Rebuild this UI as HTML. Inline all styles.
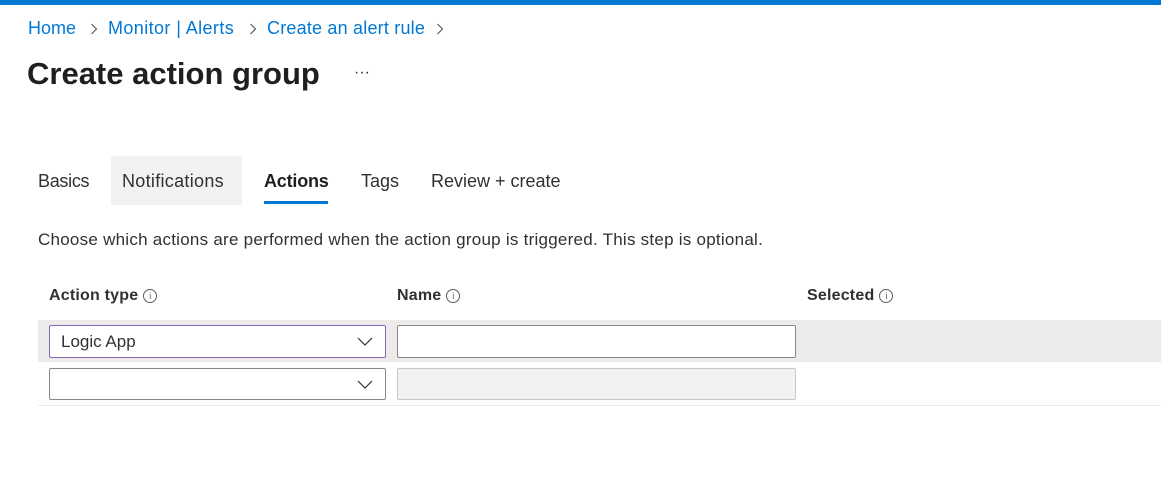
<!DOCTYPE html><html><head><style>
body{margin:0;width:1161px;height:496px;background:#fff;font-family:"Liberation Sans",sans-serif;color:#323130;position:relative;overflow:hidden}
.a{position:absolute;white-space:nowrap}
.bc{color:#0078d4;font-size:18px;top:18px}
.chev{top:23px}
.tab{font-size:18px;top:171px}
.info{display:inline-block;width:12px;height:12px;border:1px solid #605e5c;border-radius:50%;font-size:9px;line-height:12px;text-align:center;vertical-align:1px;margin-left:5px;font-weight:normal;color:#605e5c}
.box{position:absolute;border:1px solid #8a8886;border-radius:2px;background:#fff;box-sizing:border-box}
.dd svg{position:absolute;right:12px;top:11px}
</style></head><body>
<div class="a" style="left:0;top:0;width:1161px;height:5px;background:#0078d4"></div>
<div class="a bc" style="left:28px">Home</div>
<svg class="a chev" style="left:90px" width="8" height="12" viewBox="0 0 8 12"><path d="M1.5 1l5 5-5 5" fill="none" stroke="#605e5c" stroke-width="1.2"/></svg>
<div class="a bc" style="left:108px;letter-spacing:0.4px">Monitor | Alerts</div>
<svg class="a chev" style="left:249px" width="8" height="12" viewBox="0 0 8 12"><path d="M1.5 1l5 5-5 5" fill="none" stroke="#605e5c" stroke-width="1.2"/></svg>
<div class="a bc" style="left:267px;letter-spacing:0.2px">Create an alert rule</div>
<svg class="a chev" style="left:436px" width="8" height="12" viewBox="0 0 8 12"><path d="M1.5 1l5 5-5 5" fill="none" stroke="#605e5c" stroke-width="1.2"/></svg>
<div class="a" style="left:27px;top:56px;font-size:31px;font-weight:bold;color:#201f1e">Create action group</div>
<div class="a" style="left:354px;top:64px;font-size:16px">···</div>
<div class="a" style="left:111px;top:156px;width:131px;height:49px;background:#f3f2f1"></div>
<div class="a tab" style="left:38px;letter-spacing:-0.3px">Basics</div>
<div class="a tab" style="left:122px;letter-spacing:0.3px">Notifications</div>
<div class="a tab" style="left:264px;font-weight:bold;color:#201f1e;letter-spacing:-0.2px">Actions</div>
<div class="a" style="left:264px;top:201px;width:64px;height:3px;background:#0078d4"></div>
<div class="a tab" style="left:361px">Tags</div>
<div class="a tab" style="left:431px">Review + create</div>
<div class="a" style="left:38px;top:230px;font-size:17px;letter-spacing:0.25px">Choose which actions are performed when the action group is triggered. This step is optional.</div>
<div class="a" style="left:49px;top:287px;font-size:16px;font-weight:bold;letter-spacing:0.2px">Action type<span class="info">i</span></div>
<div class="a" style="left:397px;top:287px;font-size:16px;font-weight:bold;letter-spacing:0.2px">Name<span class="info">i</span></div>
<div class="a" style="left:807px;top:287px;font-size:16px;font-weight:bold;letter-spacing:0.2px">Selected<span class="info">i</span></div>
<div class="a" style="left:38px;top:320px;width:1123px;height:42px;background:#edebe9"></div>
<div class="box dd" style="left:49px;top:325px;width:337px;height:33px;border-color:#8764b8"><span class="a" style="left:11px;top:6px;font-size:17px">Logic App</span><svg width="16" height="9" viewBox="0 0 16 9"><path d="M1 1l7 7 7-7" fill="none" stroke="#323130" stroke-width="1.2"/></svg></div>
<div class="box" style="left:397px;top:325px;width:399px;height:33px"></div>
<div class="box dd" style="left:49px;top:368px;width:337px;height:32px"><svg width="16" height="9" viewBox="0 0 16 9"><path d="M1 1l7 7 7-7" fill="none" stroke="#323130" stroke-width="1.2"/></svg></div>
<div class="box" style="left:397px;top:368px;width:399px;height:32px;background:#f3f2f1;border-color:#c8c6c4"></div>
<div class="a" style="left:38px;top:405px;width:1123px;height:1px;background:#edebe9"></div>
</body></html>
